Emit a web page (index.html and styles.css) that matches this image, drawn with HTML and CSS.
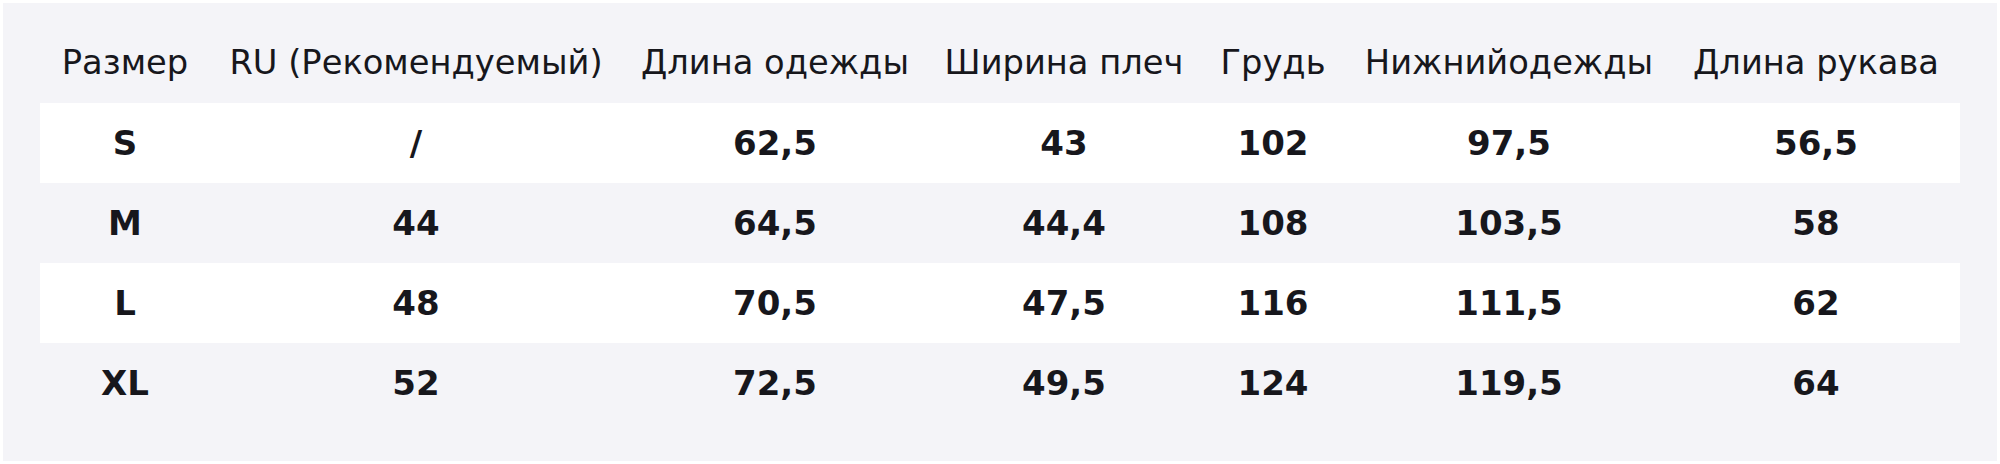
FILE: index.html
```html
<!DOCTYPE html>
<html lang="ru">
<head>
<meta charset="utf-8">
<title>Таблица размеров</title>
<link rel="stylesheet" href="styles.css">
</head>
<body>
<div class="panel">
  <table class="sizes">
    <colgroup>
      <col class="c1"><col class="c2"><col class="c3"><col class="c4"><col class="c5"><col class="c6"><col class="c7">
    </colgroup>
    <thead>
      <tr>
        <th>Размер</th>
        <th>RU (Рекомендуемый)</th>
        <th>Длина одежды</th>
        <th>Ширина плеч</th>
        <th>Грудь</th>
        <th>Нижнийодежды</th>
        <th>Длина рукава</th>
      </tr>
    </thead>
    <tbody>
      <tr class="odd"><td>S</td><td>/</td><td>62,5</td><td>43</td><td>102</td><td>97,5</td><td>56,5</td></tr>
      <tr><td>M</td><td>44</td><td>64,5</td><td>44,4</td><td>108</td><td>103,5</td><td>58</td></tr>
      <tr class="odd"><td>L</td><td>48</td><td>70,5</td><td>47,5</td><td>116</td><td>111,5</td><td>62</td></tr>
      <tr><td>XL</td><td>52</td><td>72,5</td><td>49,5</td><td>124</td><td>119,5</td><td>64</td></tr>
    </tbody>
  </table>
</div>
</body>
</html>
```

FILE: styles.css
```css
html, body {
  margin: 0;
  padding: 0;
  background: #ffffff;
}
body {
  padding: 3px;
  font-family: "DejaVu Sans", sans-serif;
  color: #17171c;
}
.panel {
  width: 1994px;
  height: 458px;
  box-sizing: border-box;
  background: #f4f4f8;
  padding: 37px;
}
.sizes {
  width: 1920px;
  border-collapse: collapse;
  table-layout: fixed;
  font-size: 34px;
}
.c1 { width: 170px; }
.c2 { width: 412px; }
.c3 { width: 306px; }
.c4 { width: 272px; }
.c5 { width: 146px; }
.c6 { width: 326px; }
.c7 { width: 288px; }
.sizes th {
  font-weight: normal;
  font-size: 33.7px;
  height: 45px;
  padding: 0 0 18px;
  text-align: center;
  white-space: nowrap;
  vertical-align: middle;
}
.sizes td {
  font-weight: bold;
  height: 80px;
  padding: 0;
  text-align: center;
  vertical-align: middle;
}
.sizes tr.odd td {
  background: #ffffff;
}
```
